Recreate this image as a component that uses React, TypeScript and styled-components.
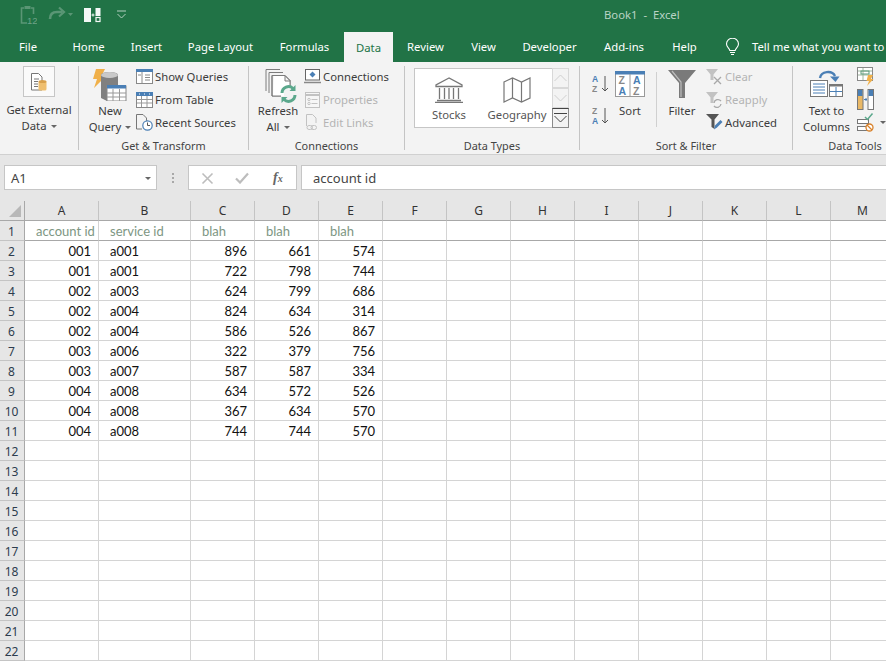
import styled, { createGlobalStyle } from 'styled-components'

const GlobalStyle = createGlobalStyle`
  html, body {
    margin: 0;
    height: 100%;
    overflow: hidden;
    background: #fff;
  }
  * {
    box-sizing: border-box;
  }
`

const Window = styled.div`
  width: 886px;
  height: 662px;
  overflow: hidden;
  font-family: "Noto Sans", "Open Sans", sans-serif;
  font-size: 11.3px;
  color: #3c3c3c;
`

const TitleBar = styled.div`
  display: grid;
  grid-template-columns: 604px 1fr;
  align-items: center;
  height: 31px;
  padding-bottom: 2px;
  background: #217346;
`

const QuickAccess = styled.div`
  display: flex;
  align-items: center;
  padding-left: 20px;

  svg {
    display: block;
    flex: none;
  }
`

const QatSlot = styled.div<{ $left: number }>`
  flex: none;
  margin-left: ${p => p.$left}px;
`

const Title = styled.div`
  color: #b9d3c5;
  white-space: pre;
`

const TabBar = styled.div`
  display: flex;
  height: 31px;
  background: #217346;
  color: #fff;
`

const Tab = styled.div<{ $w: number; $active?: boolean }>`
  flex: none;
  display: flex;
  align-items: center;
  justify-content: center;
  width: ${p => p.$w}px;
  margin: ${p => (p.$active ? '1px 0 0 4px' : '0')};
  background: ${p => (p.$active ? '#f3f3f3' : 'transparent')};
  color: ${p => (p.$active ? '#217346' : '#fff')};
`

const TellMe = styled.div`
  display: flex;
  align-items: center;
  gap: 12px;
  margin-left: 14px;
  white-space: nowrap;
`

const Ribbon = styled.div`
  display: flex;
  height: 93px;
  background: #f3f3f3;
  border-bottom: 1px solid #d0d0d0;
  overflow: hidden;
`

const Group = styled.div<{ $w: number }>`
  flex: none;
  display: flex;
  flex-direction: column;
  width: ${p => p.$w}px;
`

const GroupBody = styled.div<{ $pad?: number }>`
  display: flex;
  height: 76px;
  padding: 3px 0 0 ${p => p.$pad ?? 0}px;
`

const GroupLabel = styled.div`
  height: 16px;
  line-height: 16px;
  font-size: 10.9px;
  text-align: center;
  color: #444;
`

const GroupDivider = styled.div`
  flex: none;
  width: 1px;
  height: 84px;
  margin-top: 4px;
  background: #c4c4c4;
`

const LargeButton = styled.div<{ $w: number }>`
  flex: none;
  display: flex;
  flex-direction: column;
  align-items: center;
  width: ${p => p.$w}px;
  line-height: 16px;
  white-space: nowrap;
  text-align: center;
`

const IconSlot = styled.div<{ $top?: number; $left?: number }>`
  flex: none;
  display: flex;
  align-items: flex-start;
  justify-content: center;
  width: 100%;
  height: 38px;
  padding: ${p => p.$top ?? 0}px 0 0 ${p => p.$left ?? 0}px;

  svg {
    display: block;
    flex: none;
  }
`

const SmallStack = styled.div<{ $left?: number }>`
  flex: none;
  display: flex;
  flex-direction: column;
  margin-left: ${p => p.$left ?? 0}px;
`

const SmallRow = styled.div<{ $off?: boolean }>`
  display: flex;
  align-items: center;
  gap: 2px;
  height: 23px;
  padding-left: 2px;
  white-space: nowrap;
  color: ${p => (p.$off ? '#b4b4b4' : '#3c3c3c')};

  svg {
    display: block;
    flex: none;
  }
`

const HoverBox = styled.div`
  display: flex;
  align-items: center;
  justify-content: center;
  width: 32px;
  height: 31px;
  margin: 1px 0 5px;
  background: #fafafa;
  border: 1px solid #c6c6c6;
`

const Caret = styled.span`
  display: inline-block;
  width: 0;
  height: 0;
  margin-left: 4px;
  vertical-align: 2px;
  border-left: 3px solid transparent;
  border-right: 3px solid transparent;
  border-top: 3px solid #666;
`

const GalleryWrap = styled.div`
  display: flex;
  align-items: flex-start;
  height: 76px;
  padding: 6px 0 0 9px;
`

const Gallery = styled.div`
  display: flex;
  width: 138px;
  height: 60px;
  background: #fff;
  border: 1px solid #c6c6c6;
  border-right: none;
`

const GalleryItem = styled.div`
  display: flex;
  flex-direction: column;
  align-items: center;
  width: 68px;
  padding-top: 8px;
  color: #555;
  white-space: nowrap;

  svg {
    display: block;
    margin-bottom: 4px;
  }
`

const GalleryScroll = styled.div`
  display: flex;
  flex-direction: column;
  width: 17px;
`

const ScrollButton = styled.div<{ $strong?: boolean }>`
  display: flex;
  align-items: center;
  justify-content: center;
  height: 20px;
  background: #f3f3f3;
  border: 1px solid ${p => (p.$strong ? '#8a8a8a' : '#d8d8d8')};
  border-top-color: ${p => (p.$strong ? '#444' : '#d8d8d8')};

  svg {
    display: block;
  }
`

const SortArrows = styled.div`
  flex: none;
  display: flex;
  flex-direction: column;
  gap: 13px;
  width: 22px;
  padding-top: 9px;
  margin-left: 12px;

  svg {
    display: block;
  }
`

const InnerRule = styled.div`
  flex: none;
  width: 1px;
  height: 55px;
  margin: 7px 10px 0 10px;
  background: #d0d0d0;
`

const FormulaBar = styled.div`
  display: flex;
  align-items: flex-start;
  height: 46px;
  padding: 10px 0 0 4px;
  background: #e6e6e6;
`

const NameBox = styled.div`
  flex: none;
  display: flex;
  align-items: center;
  justify-content: space-between;
  width: 153px;
  height: 25px;
  padding: 1px 5px 0 6px;
  background: #fff;
  border: 1px solid #c6c6c6;
  font-size: 13px;
  color: #444;
`

const Grip = styled.div`
  flex: none;
  display: flex;
  flex-direction: column;
  gap: 2px;
  width: 2px;
  margin: 8px 14px 0 15px;

  i {
    display: block;
    width: 2px;
    height: 2px;
    background: #a8a8a8;
  }
`

const FxBox = styled.div`
  flex: none;
  display: flex;
  align-items: center;
  gap: 21px;
  width: 109px;
  height: 25px;
  padding: 1px 0 0 12px;
  background: #fff;
  border: 1px solid #c6c6c6;

  svg {
    display: block;
  }
`

const FxLabel = styled.span`
  margin-left: 3px;
  font-family: "Liberation Serif", serif;
  font-style: italic;
  font-weight: bold;
  font-size: 14px;
  color: #666;

  small {
    font-size: 10px;
  }
`

const FormulaInput = styled.div`
  flex: 1;
  height: 25px;
  margin: 0 -2px 0 4px;
  padding-left: 11px;
  line-height: 24px;
  background: #fff;
  border: 1px solid #c6c6c6;
  font-size: 13px;
  color: #444;
`

const Sheet = styled.div`
  display: grid;
  grid-template-columns: 25px 74px 92px repeat(10, 64px) 64px;
  grid-auto-rows: 20px;
  width: 1000px;
  font-family: Lato, "Noto Sans", sans-serif;
  font-size: 13px;
  color: #111;
`

const Corner = styled.div`
  display: flex;
  align-items: flex-end;
  justify-content: flex-end;
  padding: 0 3px 3px 0;
  background: #e6e6e6;
  border-right: 1px solid #a8a8a8;
  border-bottom: 1px solid #a8a8a8;

  &::after {
    content: '';
    width: 12px;
    height: 12px;
    background: #b8b8b8;
    clip-path: polygon(100% 0, 100% 100%, 0 100%);
  }
`

const ColHead = styled.div`
  display: flex;
  align-items: center;
  justify-content: center;
  background: #e6e6e6;
  border-right: 1px solid #c4c4c4;
  border-bottom: 1px solid #a8a8a8;
  font-family: "Noto Sans", sans-serif;
  font-size: 12px;
  color: #333;
`

const RowHead = styled.div`
  display: flex;
  align-items: center;
  justify-content: center;
  padding: 1px 1px 0 0;
  background: #e6e6e6;
  border-right: 1px solid #a8a8a8;
  border-bottom: 1px solid #c4c4c4;
  font-family: "Noto Sans", sans-serif;
  font-size: 12px;
  color: #2d3c4e;
`

const Cell = styled.div<{ $right?: boolean; $head?: boolean }>`
  display: flex;
  align-items: center;
  justify-content: ${p => (p.$right ? 'flex-end' : 'flex-start')};
  padding: ${p => (p.$right ? '1px 7px 0 0' : '1px 0 0 11px')};
  background: #fff;
  border-right: 1px solid #d4d4d4;
  border-bottom: 1px solid ${p => (p.$head ? '#a8a8a8' : '#d4d4d4')};
  color: ${p => (p.$head ? '#7d9683' : '#111')};
  white-space: nowrap;
  overflow: hidden;
`

const BLUE = '#4a7fb5'
const OFF = '#c2c2c2'

const ClipIcon = () => (
  <svg width="17" height="20" viewBox="0 0 17 20">
    <path d="M4 3H1.500v15H7M11 3h2.500v6" fill="none" stroke="#5a9675" strokeWidth="1.600" />
    <rect x="4.500" y="1" width="6" height="3" fill="#5a9675" />
    <text x="7" y="18.500" fontFamily="Liberation Sans" fontSize="9.500" fill="#6fa287">12</text>
  </svg>
)

const RedoIcon = () => (
  <svg width="27" height="20" viewBox="0 0 27 20">
    <path d="M3 14c0-5 3-7 7-7h5" fill="none" stroke="#5a9675" strokeWidth="2.600" />
    <path d="M12 2.500 17 7l-5 4.500" fill="none" stroke="#5a9675" strokeWidth="2.200" />
    <path d="M21 8h5l-2.500 3z" fill="#5a9675" />
  </svg>
)

const SplitIcon = () => (
  <svg width="17" height="16" viewBox="0 0 17 16">
    <rect x="0" y="1" width="7" height="14" fill="#f4f8f6" />
    <rect x="11.500" y="1" width="5" height="8" fill="#f4f8f6" />
    <rect x="12" y="10.500" width="4" height="4" fill="none" stroke="#f4f8f6" strokeWidth="1.200" />
    <path d="M7.500 8h3M9 6.500v3" stroke="#f4f8f6" strokeWidth="1" />
  </svg>
)

const CustomizeIcon = () => (
  <svg width="11" height="10" viewBox="0 0 11 10">
    <path d="M1 1h9" stroke="#b5d0c1" strokeWidth="1" />
    <path d="M1.500 4 5.500 8l4-4" fill="none" stroke="#b5d0c1" strokeWidth="1" />
  </svg>
)

const BulbIcon = () => (
  <svg width="15" height="18" viewBox="0 0 15 18">
    <path d="M4.800 12.500c0-2-3.300-3.300-3.300-6.600a6 5.600 0 0 1 12 0c0 3.300-3.300 4.600-3.300 6.600z" fill="none" stroke="#fff" strokeWidth="1.100" />
    <path d="M5 14.500h5M6 16.500h3" stroke="#fff" strokeWidth="1.100" />
  </svg>
)

const ExternalIcon = () => (
  <svg width="16" height="18" viewBox="0 0 16 18">
    <path d="M.5.5h7l3.500 3.500v13H.5z" fill="#fff" stroke="#777" />
    <path d="M3 6h5M3 8.500h4M3 11h4M3 13.500h4" stroke="#777" />
    <rect x="7.500" y="8" width="8" height="9.500" rx="1.500" fill="#efbf6f" />
    <ellipse cx="11.500" cy="8.500" rx="4" ry="1.600" fill="#d8a04c" />
  </svg>
)

const NewQueryIcon = () => (
  <svg width="34" height="33" viewBox="0 0 34 33">
    <path d="M3 1h9L8 9h4L1 20l3-9H0z" fill="#f0b04a" />
    <path d="M8 7c0-4 17-4 17 0v26H14l-6-3z" fill="#808080" />
    <ellipse cx="16.500" cy="7" rx="8.500" ry="3" fill="#c9c9c9" />
    <rect x="14" y="18" width="19" height="15" fill="#fff" stroke="#888" />
    <rect x="14" y="17" width="19" height="3.500" fill={BLUE} />
    <path d="M20 21v12M26.500 21v12M14 25h19M14 29h19" stroke="#999" />
  </svg>
)

const ShowQueriesIcon = () => (
  <svg width="17" height="15" viewBox="0 0 17 15">
    <rect x=".5" y=".5" width="16" height="14" fill="#fff" stroke="#888" />
    <rect x="0" y="0" width="17" height="3" fill={BLUE} />
    <path d="M6 3v11M9 6h5M9 8.500h5M9 11h5M2 6h3" stroke="#8a8a8a" />
  </svg>
)

const FromTableIcon = () => (
  <svg width="17" height="16" viewBox="0 0 17 16">
    <rect x=".5" y=".5" width="16" height="15" fill="#fff" stroke="#888" />
    <rect x="0" y="0" width="17" height="4" fill={BLUE} />
    <path d="M5.500 4v11M11 4v11M1 7.500h15M1 11h15" stroke="#999" />
    <path d="M3 2h1M8 2h1M13 2h1" stroke="#fff" />
  </svg>
)

const RecentIcon = () => (
  <svg width="17" height="17" viewBox="0 0 17 17">
    <path d="M.5 15V.5H7l3.500 3.500v4M.5 15H6" fill="none" stroke="#777" />
    <circle cx="11.500" cy="11.500" r="4.700" fill="#fff" stroke={BLUE} strokeWidth="1.200" />
    <path d="M11.500 8.500v3h2.500" fill="none" stroke="#555" />
  </svg>
)

const RefreshIcon = () => (
  <svg width="32" height="34" viewBox="0 0 32 34">
    <path d="M1 22V.5h14M4 24V3.500h14M7 27V6.500h13l5 5V17M7 27h9" fill="none" stroke="#7c7c7c" />
    <path d="M9 7h11v5h5v6h-6v9H8z" fill="#fff" />
    <path d="M7 27V6.500h13l5 5V17M7 27h9M20 6.500V12h5" fill="none" stroke="#7c7c7c" />
    <path d="M17 24a6.500 6.500 0 0 1 11-4.500" fill="none" stroke="#5ba88c" strokeWidth="3" />
    <path d="M30.500 16v6h-6z" fill="#5ba88c" />
    <path d="M30 26a6.500 6.500 0 0 1-11 4.500" fill="none" stroke="#5ba88c" strokeWidth="3" />
    <path d="M16.500 34v-6h6z" fill="#5ba88c" />
  </svg>
)

const ConnectionsIcon = () => (
  <svg width="17" height="15" viewBox="0 0 17 15">
    <rect x="1.500" y=".5" width="14" height="10.500" fill="#fff" stroke="#666" />
    <path d="M0 13.500h17" stroke="#888" strokeWidth="1.500" />
    <path d="M8.500 2.500l3 3-3 3-3-3z" fill={BLUE} />
  </svg>
)

const PropertiesIcon = () => (
  <svg width="17" height="16" viewBox="0 0 17 16">
    <rect x="1.500" y=".5" width="14" height="15" fill="#f6f6f6" stroke={OFF} />
    <path d="M2 3h13" stroke={OFF} strokeWidth="2" />
    <path d="M7.500 7.500h6M7.500 11.500h6" stroke={OFF} />
    <circle cx="5" cy="7.500" r="1.200" fill="none" stroke={OFF} />
    <circle cx="5" cy="11.500" r="1.200" fill="none" stroke={OFF} />
  </svg>
)

const EditLinksIcon = () => (
  <svg width="17" height="17" viewBox="0 0 17 17">
    <path d="M2.500 12V.5h6l3.500 3.500v5" fill="none" stroke={OFF} />
    <rect x="3" y="11.500" width="5.500" height="4" rx="2" fill="none" stroke={OFF} />
    <rect x="7" y="11.500" width="5.500" height="4" rx="2" fill="none" stroke={OFF} />
  </svg>
)

const StocksIcon = () => (
  <svg width="28" height="26" viewBox="0 0 28 26">
    <path d="M14 1 1 8v1.500h26V8zM2 23.500h24M0 25.500h28" fill="none" stroke="#777" strokeWidth="1.300" />
    <path d="M4.500 11v11M9.500 11v11M14 11v11M18.500 11v11M23.500 11v11" stroke="#777" strokeWidth="1.300" />
  </svg>
)

const GeographyIcon = () => (
  <svg width="28" height="26" viewBox="0 0 28 26">
    <path d="M1 5 9.500 1l9 4L27 1v20l-8.500 4-9-4L1 25z" fill="#fff" stroke="#777" strokeWidth="1.200" />
    <path d="M9.500 1v20M18.500 5v20" stroke="#777" strokeWidth="1.200" />
  </svg>
)

const ChevronIcon = ({ up, color }: { up?: boolean; color: string }) => (
  <svg width="13" height="8" viewBox="0 0 13 8">
    <path d={up ? 'M.5 7 6.500 1l6 6' : 'M.5 1l6 6 6-6'} fill="none" stroke={color} />
  </svg>
)

const MoreIcon = () => (
  <svg width="13" height="11" viewBox="0 0 13 11">
    <path d="M0 .5h13" stroke="#444" />
    <path d="M.5 3l6 6 6-6" fill="none" stroke="#444" />
  </svg>
)

const letterStyle = { fontFamily: 'Liberation Sans', fontWeight: 'bold' } as const

const SortAzIcon = ({ reverse }: { reverse?: boolean }) => (
  <svg width="17" height="19" viewBox="0 0 17 19">
    <text x="0" y="8" fontSize="8.500" style={letterStyle} fill={reverse ? '#888' : BLUE}>{reverse ? 'Z' : 'A'}</text>
    <text x="0" y="18" fontSize="8.500" style={letterStyle} fill={reverse ? BLUE : '#888'}>{reverse ? 'A' : 'Z'}</text>
    <path d="M13 2v15M10 14l3 3 3-3" fill="none" stroke="#555" />
  </svg>
)

const SortIcon = () => (
  <svg width="30" height="26" viewBox="0 0 30 26">
    <rect x=".5" y=".5" width="29" height="25" fill="#fff" stroke="#999" />
    <rect x="0" y="0" width="30" height="3.500" fill={BLUE} />
    <path d="M15 3v22" stroke="#999" />
    <text x="3.500" y="13" fontSize="10.500" style={letterStyle} fill="#888">Z</text>
    <text x="3.500" y="24" fontSize="10.500" style={letterStyle} fill={BLUE}>A</text>
    <text x="18" y="13" fontSize="10.500" style={letterStyle} fill={BLUE}>A</text>
    <text x="18" y="24" fontSize="10.500" style={letterStyle} fill="#888">Z</text>
  </svg>
)

const FilterIcon = () => (
  <svg width="28" height="28" viewBox="0 0 28 28">
    <path d="M0 0h28L17 13v15h-6V13z" fill="#7a7a7a" />
    <path d="M4 1 13 12v15" fill="none" stroke="#bdbdbd" strokeWidth="1.200" />
  </svg>
)

const ClearIcon = () => (
  <svg width="17" height="16" viewBox="0 0 17 16">
    <path d="M0 0h12L7.500 5.500V11h-3V5.500z" fill={OFF} />
    <path d="M8 8l7 7M15 8l-7 7" stroke="#a8a8a8" strokeWidth="1.300" />
  </svg>
)

const ReapplyIcon = () => (
  <svg width="17" height="16" viewBox="0 0 17 16">
    <path d="M0 0h12L7.500 5.500V11h-3V5.500z" fill={OFF} />
    <path d="M8 11a4 4 0 0 1 7-2M15 12a4 4 0 0 1-7 2" fill="none" stroke="#a8a8a8" strokeWidth="1.300" />
  </svg>
)

const AdvancedIcon = () => (
  <svg width="17" height="17" viewBox="0 0 17 17">
    <path d="M0 0h13L8.500 5.500V15l-3-2V5.500z" fill="#555" />
    <path d="M8 15.500l1-4 5.500-5.500 2 2L11 13.500z" fill={BLUE} />
  </svg>
)

const TextColumnsIcon = () => (
  <svg width="33" height="27" viewBox="0 0 33 27">
    <rect x=".5" y="10.500" width="17" height="16" fill="#fff" stroke="#777" />
    <path d="M3 14h12M3 17h12M3 20h12M3 23h12" stroke={BLUE} />
    <rect x="19.500" y="14.500" width="13" height="12" fill="#fff" stroke="#777" />
    <path d="M19.500 15.500h13" stroke="#777" strokeWidth="2" />
    <path d="M26 17v9M20 21.500h12" stroke={BLUE} />
    <path d="M10 8C11 1 22 0 25 6" fill="none" stroke={BLUE} strokeWidth="2.400" />
    <path d="M20 6.500h9.500L25.500 12z" fill={BLUE} />
  </svg>
)

const FlashFillIcon = () => (
  <svg width="17" height="19" viewBox="0 0 17 19">
    <rect x=".5" y=".5" width="15" height="13" fill="#fff" stroke="#888" />
    <path d="M1 4h14M1 8h14M6 1v12" stroke="#9fb89f" />
    <rect x="4" y="4" width="8" height="3" fill="none" stroke="#5a9a7a" />
    <path d="M11 8h5l-2 4h2.500L10 19l2-5H9.500z" fill="#f0b04a" />
  </svg>
)

const RemoveDupesIcon = () => (
  <svg width="17" height="21" viewBox="0 0 17 21">
    <rect x=".5" y=".5" width="5.500" height="20" fill="#e9b866" stroke="#777" />
    <rect x="1" y="1" width="4.500" height="6" fill={BLUE} />
    <rect x="11" y=".5" width="5.500" height="20" fill="#fff" stroke="#777" />
    <rect x="11.500" y="1" width="4.500" height="6" fill={BLUE} />
    <path d="M7 10.500h3M9 9v3" stroke={BLUE} />
  </svg>
)

const ValidationIcon = () => (
  <svg width="17" height="19" viewBox="0 0 17 19">
    <rect x=".5" y="6.500" width="11" height="4" fill="#fff" stroke="#777" />
    <rect x=".5" y="13.500" width="9" height="4" fill="#fff" stroke="#777" />
    <path d="M8 4l2.500 2.500L15.500.5" fill="none" stroke="#5ba88c" strokeWidth="1.500" />
    <circle cx="12.500" cy="14.500" r="3.500" fill="#fff" stroke="#d9822b" strokeWidth="1.300" />
    <path d="M10 12l5 5" stroke="#d9822b" strokeWidth="1.300" />
  </svg>
)

const CrossIcon = () => (
  <svg width="13" height="13" viewBox="0 0 13 13">
    <path d="M1.500 1.500l10 10M11.500 1.500l-10 10" stroke="#bdbdbd" strokeWidth="1.600" />
  </svg>
)

const CheckIcon = () => (
  <svg width="14" height="12" viewBox="0 0 14 12">
    <path d="M1 6.500 5 10.500 13 1.500" fill="none" stroke="#bdbdbd" strokeWidth="2.200" />
  </svg>
)

const columns = ['A', 'B', 'C', 'D', 'E', 'F', 'G', 'H', 'I', 'J', 'K', 'L', 'M']

const rows: string[][] = [
  ['001', 'a001', '896', '661', '574'],
  ['001', 'a001', '722', '798', '744'],
  ['002', 'a003', '624', '799', '686'],
  ['002', 'a004', '824', '634', '314'],
  ['002', 'a004', '586', '526', '867'],
  ['003', 'a006', '322', '379', '756'],
  ['003', 'a007', '587', '587', '334'],
  ['004', 'a008', '634', '572', '526'],
  ['004', 'a008', '367', '634', '570'],
  ['004', 'a008', '744', '744', '570'],
]

const headings = ['account id', 'service id', 'blah', 'blah', 'blah']

const tabs: [string, number][] = [
  ['File', 56],
  ['Home', 65],
  ['Insert', 51],
  ['Page Layout', 97],
  ['Formulas', 71],
]

const tabsAfter: [string, number][] = [
  ['Review', 65],
  ['View', 51],
  ['Developer', 81],
  ['Add-ins', 68],
  ['Help', 53],
]

const App = () => (
  <Window>
    <GlobalStyle />
    <TitleBar>
      <QuickAccess>
        <ClipIcon />
        <QatSlot $left={10}><RedoIcon /></QatSlot>
        <QatSlot $left={10}><SplitIcon /></QatSlot>
        <QatSlot $left={15}><CustomizeIcon /></QatSlot>
      </QuickAccess>
      <Title>Book1  -  Excel</Title>
    </TitleBar>
    <TabBar>
      {tabs.map(([name, w]) => <Tab key={name} $w={w}>{name}</Tab>)}
      <Tab $w={49} $active>Data</Tab>
      {tabsAfter.map(([name, w]) => <Tab key={name} $w={w}>{name}</Tab>)}
      <TellMe>
        <BulbIcon />
        Tell me what you want to
      </TellMe>
    </TabBar>
    <Ribbon>
      <Group $w={78}>
        <GroupBody>
          <LargeButton $w={78}>
            <HoverBox><ExternalIcon /></HoverBox>
            Get External
            <span>Data<Caret /></span>
          </LargeButton>
        </GroupBody>
      </Group>
      <GroupDivider />
      <Group $w={169}>
        <GroupBody $pad={9}>
          <LargeButton $w={44}>
            <IconSlot $top={3}><NewQueryIcon /></IconSlot>
            New
            <span>Query<Caret /></span>
          </LargeButton>
          <SmallStack $left={2}>
            <SmallRow><ShowQueriesIcon />Show Queries</SmallRow>
            <SmallRow><FromTableIcon />From Table</SmallRow>
            <SmallRow><RecentIcon />Recent Sources</SmallRow>
          </SmallStack>
        </GroupBody>
        <GroupLabel>Get &amp; Transform</GroupLabel>
      </Group>
      <GroupDivider />
      <Group $w={155}>
        <GroupBody $pad={9}>
          <LargeButton $w={40}>
            <IconSlot $top={4} $left={6}><RefreshIcon /></IconSlot>
            Refresh
            <span>All<Caret /></span>
          </LargeButton>
          <SmallStack $left={4}>
            <SmallRow><ConnectionsIcon />Connections</SmallRow>
            <SmallRow $off><PropertiesIcon />Properties</SmallRow>
            <SmallRow $off><EditLinksIcon />Edit Links</SmallRow>
          </SmallStack>
        </GroupBody>
        <GroupLabel>Connections</GroupLabel>
      </Group>
      <GroupDivider />
      <Group $w={174}>
        <GalleryWrap>
          <Gallery>
            <GalleryItem><StocksIcon />Stocks</GalleryItem>
            <GalleryItem><GeographyIcon />Geography</GalleryItem>
          </Gallery>
          <GalleryScroll>
            <ScrollButton><ChevronIcon up color="#cfcfcf" /></ScrollButton>
            <ScrollButton><ChevronIcon color="#cfcfcf" /></ScrollButton>
            <ScrollButton $strong><MoreIcon /></ScrollButton>
          </GalleryScroll>
        </GalleryWrap>
        <GroupLabel>Data Types</GroupLabel>
      </Group>
      <GroupDivider />
      <Group $w={212}>
        <GroupBody>
          <SortArrows>
            <SortAzIcon />
            <SortAzIcon reverse />
          </SortArrows>
          <LargeButton $w={32}>
            <IconSlot $top={6}><SortIcon /></IconSlot>
            Sort
          </LargeButton>
          <InnerRule />
          <LargeButton $w={30}>
            <IconSlot $top={5}><FilterIcon /></IconSlot>
            Filter
          </LargeButton>
          <SmallStack $left={7}>
            <SmallRow $off><ClearIcon />Clear</SmallRow>
            <SmallRow $off><ReapplyIcon />Reapply</SmallRow>
            <SmallRow><AdvancedIcon />Advanced</SmallRow>
          </SmallStack>
        </GroupBody>
        <GroupLabel>Sort &amp; Filter</GroupLabel>
      </Group>
      <GroupDivider />
      <Group $w={124}>
        <GroupBody $pad={5}>
          <LargeButton $w={57}>
            <IconSlot $top={5}><TextColumnsIcon /></IconSlot>
            Text to
            <span>Columns</span>
          </LargeButton>
          <SmallStack>
            <SmallRow><FlashFillIcon /></SmallRow>
            <SmallRow><RemoveDupesIcon /></SmallRow>
            <SmallRow><ValidationIcon /><Caret /></SmallRow>
          </SmallStack>
        </GroupBody>
        <GroupLabel>Data Tools</GroupLabel>
      </Group>
    </Ribbon>
    <FormulaBar>
      <NameBox>A1<Caret /></NameBox>
      <Grip><i /><i /><i /></Grip>
      <FxBox>
        <CrossIcon />
        <CheckIcon />
        <FxLabel>f<small>x</small></FxLabel>
      </FxBox>
      <FormulaInput>account id</FormulaInput>
    </FormulaBar>
    <Sheet>
      <Corner />
      {columns.map(c => <ColHead key={c}>{c}</ColHead>)}
      {Array.from({ length: 22 }, (_, r) => {
        const values = r === 0 ? headings : rows[r - 1] ?? []
        return [
          <RowHead key={`head-${r}`}>{r + 1}</RowHead>,
          ...columns.map((c, i) => (
            <Cell
              key={`${c}${r}`}
              $head={r === 0}
              $right={r > 0 && i !== 1}
            >
              {values[i]}
            </Cell>
          )),
        ]
      })}
    </Sheet>
  </Window>
)

export default App
